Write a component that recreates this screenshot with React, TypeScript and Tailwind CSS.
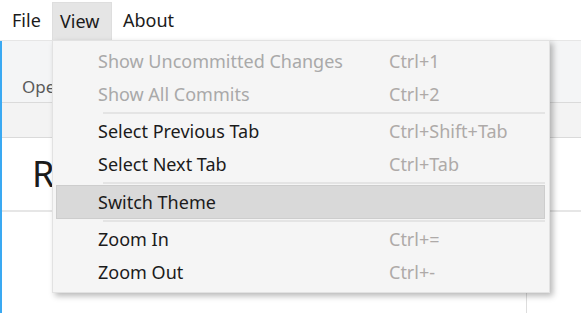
import React from "react";

type Item = { label: string; shortcut?: string; disabled?: boolean; active?: boolean } | "sep";

const items: Item[] = [
  { label: "Show Uncommitted Changes", shortcut: "Ctrl+1", disabled: true },
  { label: "Show All Commits", shortcut: "Ctrl+2", disabled: true },
  "sep",
  { label: "Select Previous Tab", shortcut: "Ctrl+Shift+Tab" },
  { label: "Select Next Tab", shortcut: "Ctrl+Tab" },
  "sep",
  { label: "Switch Theme", active: true },
  "sep",
  { label: "Zoom In", shortcut: "Ctrl+=" },
  { label: "Zoom Out", shortcut: "Ctrl+-" },
];

function ViewMenu() {
  return (
    <div className="absolute left-[52px] top-[40px] w-[498px] h-[253px] bg-[#f5f5f5] border border-[#e2e2e2] shadow-[3px_3px_6px_rgba(0,0,0,0.28)] pt-[4px] pr-[4px] pl-[3px] flex flex-col text-[18px]">
      {items.map((it, i) =>
        it === "sep" ? (
          <div key={i} className="h-[2px] bg-[#e4e4e4] ml-[47px] my-[1px]" />
        ) : (
          <div
            key={i}
            className={
              "flex items-center h-[33px] " +
              (it.active ? "bg-[#d9d9d9] border border-[#cdcdcd] h-[34px]" : "border border-transparent")
            }
          >
            <span
              className={
                "pl-[41px] w-[332px] shrink-0 " +
                (it.disabled ? "text-[#a9a9a9]" : "text-[#1b1b1b]")
              }
            >
              {it.label}
            </span>
            {it.shortcut && <span className="text-[#aeaaa8]">{it.shortcut}</span>}
          </div>
        )
      )}
    </div>
  );
}

export default function App() {
  return (
    <div
      className="relative w-[581px] h-[313px] overflow-hidden bg-white text-[18px]"
      style={{ fontFamily: '"Noto Sans", "Open Sans", sans-serif' }}
    >
      <div className="h-[41px] flex items-stretch border-b border-[#e6e6e6] text-[#1b1b1b]">
        <div className="w-[52px] pl-[12px] flex items-center">File</div>
        <div className="mt-[2px] pl-[7px] w-[60px] flex items-center bg-[#e5e5e5] border border-[#dedede] border-b-0">View</div>
        <div className="pl-[11px] flex items-center">About</div>
      </div>
      <div className="flex h-[272px]">
        <div className="w-[2px] bg-[#3aa9f2]" />
        <div className="flex-1 flex flex-col">
          <div className="h-[61px] bg-[#f4f5f6] flex items-end pb-[3px] pl-[20px] text-[#5a5a5a] text-[17px]">
            Open
          </div>
          <div className="h-[36px] bg-[#f3f3f3] border-y border-[#dadada]" />
          <div className="h-[74px] border-b-2 border-[#e6e6e6] flex items-center pl-[30px] text-[36px] text-[#1b1b1b] leading-none">
            R
          </div>
          <div className="flex-1 flex">
            <div className="w-[525px] border-r border-[#dddddd]" />
          </div>
        </div>
      </div>
      <ViewMenu />
    </div>
  );
}
